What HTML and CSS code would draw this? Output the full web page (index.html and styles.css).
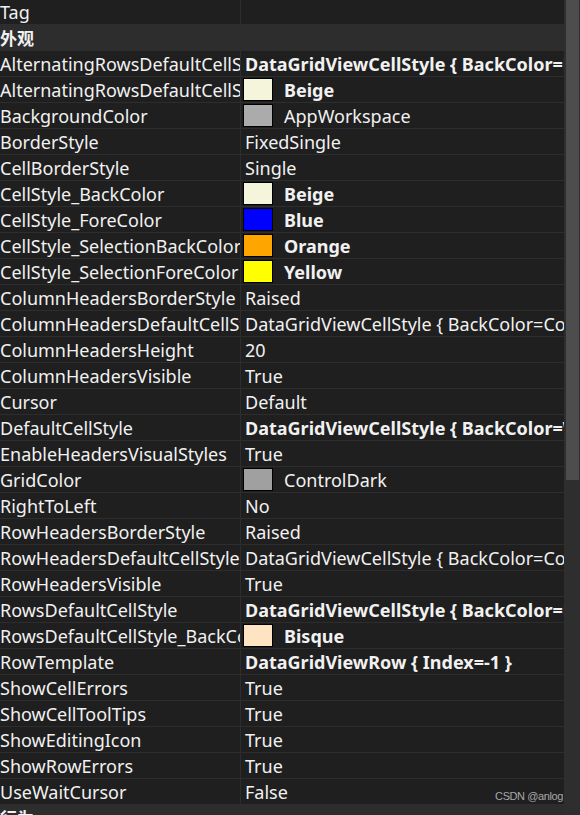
FILE: index.html
```html
<!DOCTYPE html>
<html>
<head>
<meta charset="utf-8">
<link rel="stylesheet" href="styles.css">
</head>
<body>
<div class="frame">
  <div class="grid">
    <div class="row first"><div class="name">Tag</div><div class="val"></div></div>
    <div class="cat">外观</div>
    <div class="row"><div class="name">AlternatingRowsDefaultCellStyle</div><div class="val b">DataGridViewCellStyle { BackColor=Beige }</div></div>
    <div class="row"><div class="name">AlternatingRowsDefaultCellStyle_BackColor</div><div class="val b"><span class="sw" style="background:#f5f5dc"></span>Beige</div></div>
    <div class="row"><div class="name">BackgroundColor</div><div class="val"><span class="sw" style="background:#ababab"></span>AppWorkspace</div></div>
    <div class="row"><div class="name">BorderStyle</div><div class="val">FixedSingle</div></div>
    <div class="row"><div class="name">CellBorderStyle</div><div class="val">Single</div></div>
    <div class="row"><div class="name">CellStyle_BackColor</div><div class="val b"><span class="sw" style="background:#f5f5dc"></span>Beige</div></div>
    <div class="row"><div class="name">CellStyle_ForeColor</div><div class="val b"><span class="sw" style="background:#0000ff"></span>Blue</div></div>
    <div class="row"><div class="name">CellStyle_SelectionBackColor</div><div class="val b"><span class="sw" style="background:#ffa500"></span>Orange</div></div>
    <div class="row"><div class="name">CellStyle_SelectionForeColor</div><div class="val b"><span class="sw" style="background:#ffff00"></span>Yellow</div></div>
    <div class="row"><div class="name">ColumnHeadersBorderStyle</div><div class="val">Raised</div></div>
    <div class="row"><div class="name">ColumnHeadersDefaultCellStyle</div><div class="val">DataGridViewCellStyle { BackColor=Control }</div></div>
    <div class="row"><div class="name">ColumnHeadersHeight</div><div class="val">20</div></div>
    <div class="row"><div class="name">ColumnHeadersVisible</div><div class="val">True</div></div>
    <div class="row"><div class="name">Cursor</div><div class="val">Default</div></div>
    <div class="row"><div class="name">DefaultCellStyle</div><div class="val b">DataGridViewCellStyle { BackColor=Window }</div></div>
    <div class="row"><div class="name">EnableHeadersVisualStyles</div><div class="val">True</div></div>
    <div class="row"><div class="name">GridColor</div><div class="val"><span class="sw" style="background:#a0a0a0"></span>ControlDark</div></div>
    <div class="row"><div class="name">RightToLeft</div><div class="val">No</div></div>
    <div class="row"><div class="name">RowHeadersBorderStyle</div><div class="val">Raised</div></div>
    <div class="row"><div class="name">RowHeadersDefaultCellStyle</div><div class="val">DataGridViewCellStyle { BackColor=Control }</div></div>
    <div class="row"><div class="name">RowHeadersVisible</div><div class="val">True</div></div>
    <div class="row"><div class="name">RowsDefaultCellStyle</div><div class="val b">DataGridViewCellStyle { BackColor=Bisque }</div></div>
    <div class="row"><div class="name">RowsDefaultCellStyle_BackColor</div><div class="val b"><span class="sw" style="background:#ffe4c4"></span>Bisque</div></div>
    <div class="row"><div class="name">RowTemplate</div><div class="val b">DataGridViewRow { Index=-1 }</div></div>
    <div class="row"><div class="name">ShowCellErrors</div><div class="val">True</div></div>
    <div class="row"><div class="name">ShowCellToolTips</div><div class="val">True</div></div>
    <div class="row"><div class="name">ShowEditingIcon</div><div class="val">True</div></div>
    <div class="row"><div class="name">ShowRowErrors</div><div class="val">True</div></div>
    <div class="row"><div class="name">UseWaitCursor</div><div class="val">False</div></div>
    <div class="cat">行为</div>
  </div>
  <div class="scroll"><div class="thumb"></div></div>
  <div class="mark">CSDN @anlog</div>
</div>
</body>
</html>
```
FILE: styles.css
```css
html, body {
  margin: 0;
  padding: 0;
  background: #2d2d2d;
  overflow: hidden;
}
.frame {
  position: relative;
  width: 580px;
  height: 815px;
  display: flex;
  overflow: hidden;
  font-family: "Noto Sans", "Noto Sans CJK SC", sans-serif;
  font-size: 18px;
  color: #f1f1f1;
}
.grid {
  width: 564px;
  flex: none;
  margin-top: -1px;
}
.row {
  display: flex;
  height: 25px;
  border-bottom: 1px solid #2d2d2d;
  background: #1f1f1f;
  line-height: 25px;
}
.name {
  width: 241px;
  flex: none;
  white-space: nowrap;
  overflow: hidden;
  border-right: 1px solid #2d2d2d;
  padding-top: 1px;
  box-sizing: border-box;
}
.val {
  flex: 1;
  min-width: 0;
  white-space: nowrap;
  overflow: hidden;
  padding-left: 4px;
  display: flex;
  align-items: center;
  padding-top: 1px;
  box-sizing: border-box;
}
.val.b {
  font-weight: bold;
}
.sw {
  width: 28px;
  height: 21px;
  border: 1px solid #000;
  margin-left: -2px;
  margin-right: 11px;
  margin-top: -1px;
  flex: none;
}
.cat {
  height: 26px;
  line-height: 27px;
  background: #2d2d2d;
  font-weight: bold;
  font-size: 17px;
}
.scroll {
  flex: 1;
  background: #2e2e2e;
  padding-left: 2px;
  padding-right: 1px;
}
.thumb {
  height: 480px;
  background: #4d4d4d;
}
.mark {
  position: absolute;
  right: 17px;
  top: 790px;
  font-family: "Liberation Sans", sans-serif;
  font-size: 11px;
  letter-spacing: -0.4px;
  color: #a8a8a8;
}
```
